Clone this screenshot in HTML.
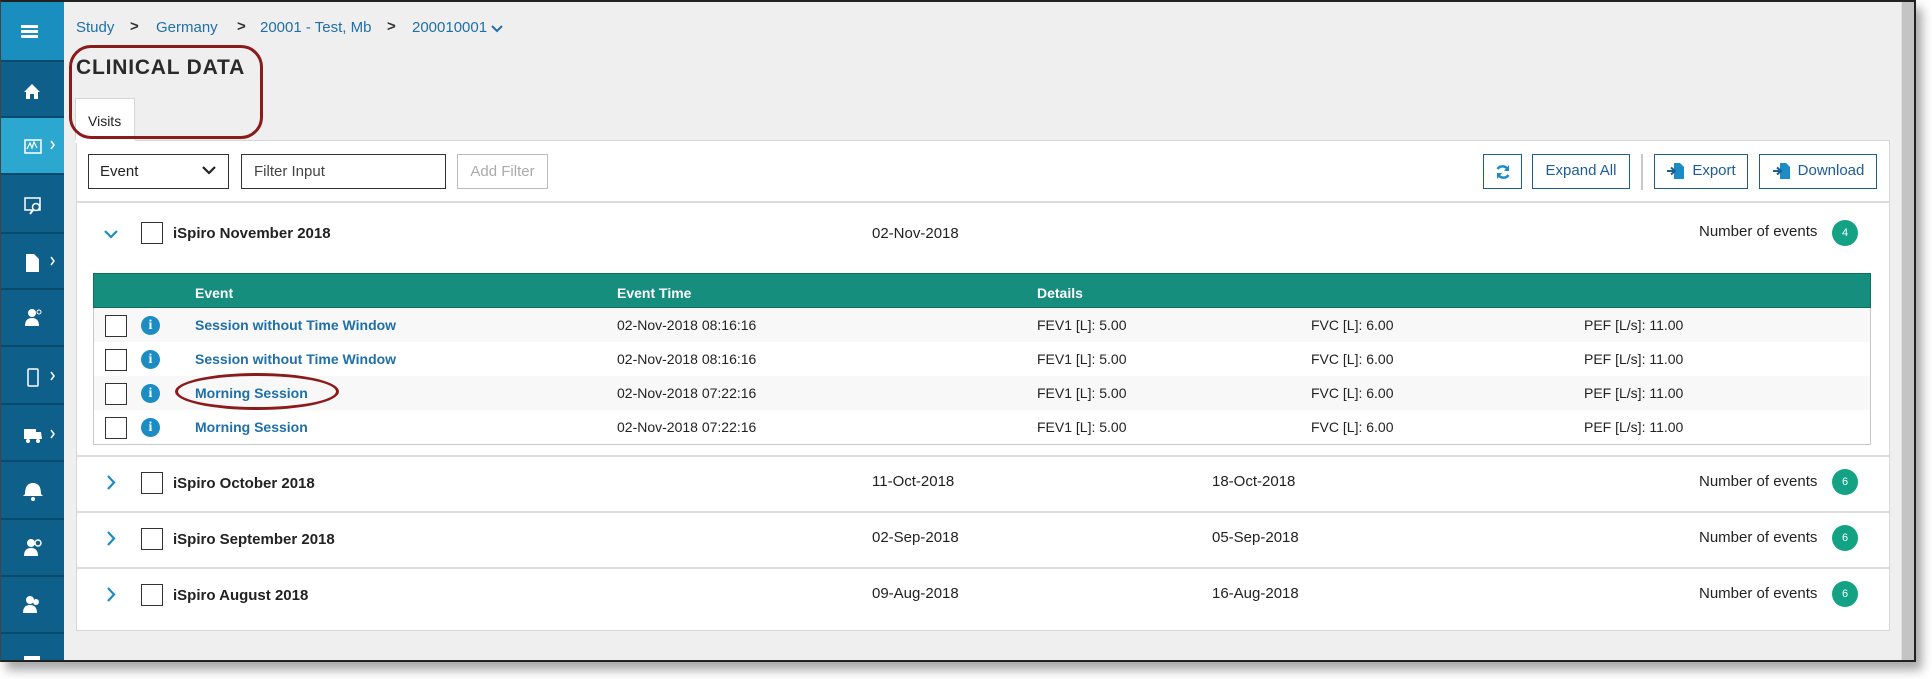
<!DOCTYPE html>
<html><head><meta charset="utf-8"><style>
*{margin:0;padding:0;box-sizing:border-box}
body{width:1932px;height:679px;background:#fff;position:relative;overflow:hidden;font-family:"Liberation Sans",sans-serif;color:#222}
.a{position:absolute}
#win{left:0;top:0;width:1916px;height:662px;background:#efefef;border:2px solid #222;border-left:1px solid #444;box-shadow:6px 8px 10px rgba(0,0,0,.35);overflow:hidden}
.sb{left:0;width:63px;background:#0f5f8b;border-bottom:2px solid #0a4a6c}
.bc{color:#1f6fa8;font-size:15px;top:17px}
.sep{color:#333;font-size:15px;top:16px;font-weight:bold}
.btn{border:1.5px solid #1c5d96;background:#fff;color:#1c5d96;font-size:15px;height:35px;top:152px;line-height:32px;text-align:center}
.chk{width:22px;height:22px;border:1.5px solid #333;background:#fff}
.t{font-size:14px}
.lnk{color:#1f6fa8;font-weight:bold;font-size:14px}
.hd{color:#fff;font-weight:bold;font-size:14px;top:283px}
.ttl{font-weight:bold;font-size:15px}
.badge{width:26px;height:26px;border-radius:13px;background:#14a285;color:#fff;font-size:11px;text-align:center;line-height:26px}
.hr{height:2px;background:#dcdcdc;left:76px;width:1812px}
.info{width:19px;height:19px;border-radius:10px;background:#1c8cc4;color:#fff;font-weight:bold;font-family:"Liberation Serif",serif;font-size:14px;text-align:center;line-height:19px;left:140px}
</style></head><body>
<div id="win" class="a">
<div class="a sb" style="top:0;height:60px;background:#1b8ec0"></div>
<div class="a" style="left:20px;top:23px;width:17px;height:3px;background:#fff;box-shadow:0 5px 0 #fff,0 10px 0 #fff"></div>
<div class="a sb" style="top:60px;height:56px"></div>
<div class="a sb" style="top:116px;height:57px;background:#2ca8d0"></div>
<div class="a sb" style="top:173px;height:59px"></div>
<div class="a sb" style="top:232px;height:56px"></div>
<div class="a sb" style="top:288px;height:57px"></div>
<div class="a sb" style="top:345px;height:58px"></div>
<div class="a sb" style="top:403px;height:57px"></div>
<div class="a sb" style="top:460px;height:58px"></div>
<div class="a sb" style="top:518px;height:57px"></div>
<div class="a sb" style="top:575px;height:57px"></div>
<div class="a sb" style="top:632px;height:40px"></div>
<svg class="a" style="left:0;top:0" width="63" height="662">
<g fill="#fff">
<path d="M23 90 L31 82 L39 90 L37 90 L37 97 L33 97 L33 92 L29 92 L29 97 L25 97 L25 90Z"/>
<rect x="24" y="138" width="16" height="13" fill="none" stroke="#fff" stroke-width="1.5"/>
<path d="M26 147 L29 141 L31 146 L33 140 L36 146" fill="none" stroke="#fff" stroke-width="1.2"/>
<path d="M50 139 L53 143 L50 147" fill="none" stroke="#fff" stroke-width="1.5"/>
<rect x="24" y="196" width="15" height="12" fill="none" stroke="#fff" stroke-width="1.5"/>
<circle cx="35" cy="205" r="3.5" fill="#0f5f8b" stroke="#fff" stroke-width="1.5"/>
<path d="M32 208 L29 212" stroke="#fff" stroke-width="2"/>
<path d="M25 252 L33 252 L38 257 L38 270 L25 270Z"/>
<path d="M50 255 L53 259 L50 263" fill="none" stroke="#fff" stroke-width="1.5"/>
<circle cx="31" cy="311" r="4"/><path d="M24 324 Q24 316 31 316 Q38 316 38 324Z"/><circle cx="38" cy="310" r="2" fill="none" stroke="#fff"/>
<rect x="27" y="367" width="10" height="17" rx="1" fill="none" stroke="#fff" stroke-width="1.5"/>
<path d="M50 370 L53 374 L50 378" fill="none" stroke="#fff" stroke-width="1.5"/>
<path d="M23 427 L35 427 L35 430 L40 430 L41 437 L23 437Z"/><circle cx="27" cy="439" r="2"/><circle cx="37" cy="439" r="2"/>
<path d="M50 428 L53 432 L50 436" fill="none" stroke="#fff" stroke-width="1.5"/>
<path d="M24 492 Q24 481 32 481 Q40 481 40 492 L42 494 L22 494Z"/><circle cx="32" cy="497" r="2"/>
<circle cx="30" cy="541" r="4"/><path d="M23 554 Q23 546 30 546 Q37 546 37 554Z"/><circle cx="37" cy="541" r="3" fill="none" stroke="#fff" stroke-width="1.5"/>
<circle cx="29" cy="598" r="4"/><path d="M22 611 Q22 603 29 603 Q36 603 36 611Z"/><circle cx="35" cy="600" r="3"/>
<rect x="23" y="654" width="16" height="8"/>
</g></svg>
<div class="a bc" style="left:75px">Study</div>
<div class="a sep" style="left:129px">&gt;</div>
<div class="a bc" style="left:155px">Germany</div>
<div class="a sep" style="left:236px">&gt;</div>
<div class="a bc" style="left:259px">20001 - Test, Mb</div>
<div class="a sep" style="left:386px">&gt;</div>
<div class="a bc" style="left:411px">200010001</div>
<svg class="a" style="left:489px;top:22px" width="14" height="10"><path d="M2 2 L7 7 L12 2" fill="none" stroke="#1f6fa8" stroke-width="2"/></svg>
<div class="a" style="left:75px;top:54px;font-size:21px;font-weight:bold;letter-spacing:0.8px;color:#2a2a2a">CLINICAL DATA</div>
<div class="a" style="left:74px;top:96px;width:60px;height:44px;background:#fff;border:1px solid #d6d6d6;border-bottom:none;font-size:14px;padding:14px 0 0 12px">Visits</div>
<div class="a" style="left:75px;top:138px;width:1814px;height:491px;background:#fff;border:1px solid #d6d6d6"></div>
<div class="a" style="left:74px;top:138px;width:60px;height:3px;background:#fff"></div>
<div class="a" style="left:87px;top:152px;width:141px;height:35px;border:1.5px solid #333;font-size:15px;padding:8px 11px">Event</div>
<svg class="a" style="left:200px;top:163px" width="16" height="12"><path d="M2 2 L8 8 L14 2" fill="none" stroke="#222" stroke-width="2.2"/></svg>
<div class="a" style="left:240px;top:152px;width:205px;height:35px;border:1.5px solid #333;font-size:15px;padding:8px 12px;color:#444">Filter Input</div>
<div class="a" style="left:456px;top:152px;width:91px;height:35px;border:1px solid #bbb;font-size:15px;color:#aaa;text-align:center;line-height:33px">Add Filter</div>
<div class="a btn" style="left:1482px;width:39px"><svg width="18" height="18" style="margin-top:8px"><path d="M14 7 A6 6 0 0 0 3.5 6 M4 11 A6 6 0 0 0 14.5 12" fill="none" stroke="#1c8cc4" stroke-width="2.5"/><path d="M15 2 L15 8 L10 8Z M3 16 L3 10 L8 10Z" fill="#1c8cc4"/></svg></div>
<div class="a btn" style="left:1531px;width:98px">Expand All</div>
<div class="a" style="left:1640px;top:152px;width:2px;height:36px;background:#c8c8c8"></div>
<div class="a btn" style="left:1653px;width:94px;padding-left:26px">Export</div>
<div class="a btn" style="left:1758px;width:118px;padding-left:26px">Download</div>
<svg class="a" style="left:1665px;top:159px" width="20" height="20"><path d="M8 2 L14 2 L18 6 L18 18 L8 18Z" fill="#1c8cc4"/><path d="M1 10 L8 10 M5 6.5 L9 10 L5 13.5" fill="none" stroke="#1c5d96" stroke-width="2"/></svg>
<svg class="a" style="left:1771px;top:159px" width="20" height="20"><path d="M8 2 L14 2 L18 6 L18 18 L8 18Z" fill="#1c8cc4"/><path d="M1 10 L8 10 M5 6.5 L9 10 L5 13.5" fill="none" stroke="#1c5d96" stroke-width="2"/></svg>
<div class="a hr" style="top:199px"></div>
<svg class="a" style="left:102px;top:227px" width="16" height="11"><path d="M2 2 L8 8 L14 2" fill="none" stroke="#1c8cc4" stroke-width="2.2"/></svg>
<div class="a chk" style="left:140px;top:220px"></div>
<div class="a ttl" style="left:172px;top:223px">iSpiro November 2018</div>
<div class="a t" style="left:871px;top:223px;font-size:15px">02-Nov-2018</div>
<div class="a" style="left:1698px;top:221px;font-size:15px">Number of events</div>
<div class="a badge" style="left:1831px;top:218px">4</div>
<div class="a" style="left:92px;top:271px;width:1778px;height:172px;border:1px solid #c8c8c8;border-top:none;background:#fff"></div>
<div class="a" style="left:92px;top:271px;width:1778px;height:35px;background:#168e7d;border:1px solid #0f6f5f"></div>
<div class="a hd" style="left:194px">Event</div>
<div class="a hd" style="left:616px">Event Time</div>
<div class="a hd" style="left:1036px">Details</div>
<div class="a" style="left:93px;top:306px;width:1776px;height:34px;background:#f8f8f8"></div>
<div class="a" style="left:93px;top:374px;width:1776px;height:34px;background:#f8f8f8"></div>

<div class="a chk" style="left:104px;top:313px"></div><div class="a info" style="left:140px;top:314px">i</div>
<div class="a lnk" style="left:194px;top:315px">Session without Time Window</div>
<div class="a t" style="left:616px;top:315px">02-Nov-2018 08:16:16</div><div class="a t" style="left:1036px;top:315px">FEV1 [L]: 5.00</div><div class="a t" style="left:1310px;top:315px">FVC [L]: 6.00</div><div class="a t" style="left:1583px;top:315px">PEF [L/s]: 11.00</div>

<div class="a chk" style="left:104px;top:347px"></div><div class="a info" style="left:140px;top:348px">i</div>
<div class="a lnk" style="left:194px;top:349px">Session without Time Window</div>
<div class="a t" style="left:616px;top:349px">02-Nov-2018 08:16:16</div><div class="a t" style="left:1036px;top:349px">FEV1 [L]: 5.00</div><div class="a t" style="left:1310px;top:349px">FVC [L]: 6.00</div><div class="a t" style="left:1583px;top:349px">PEF [L/s]: 11.00</div>

<div class="a chk" style="left:104px;top:381px"></div><div class="a info" style="left:140px;top:382px">i</div>
<div class="a lnk" style="left:194px;top:383px">Morning Session</div>
<div class="a t" style="left:616px;top:383px">02-Nov-2018 07:22:16</div><div class="a t" style="left:1036px;top:383px">FEV1 [L]: 5.00</div><div class="a t" style="left:1310px;top:383px">FVC [L]: 6.00</div><div class="a t" style="left:1583px;top:383px">PEF [L/s]: 11.00</div>

<div class="a chk" style="left:104px;top:415px"></div><div class="a info" style="left:140px;top:416px">i</div>
<div class="a lnk" style="left:194px;top:417px">Morning Session</div>
<div class="a t" style="left:616px;top:417px">02-Nov-2018 07:22:16</div><div class="a t" style="left:1036px;top:417px">FEV1 [L]: 5.00</div><div class="a t" style="left:1310px;top:417px">FVC [L]: 6.00</div><div class="a t" style="left:1583px;top:417px">PEF [L/s]: 11.00</div>

<div class="a hr" style="top:453px"></div>
<svg class="a" style="left:104px;top:472px" width="12" height="17"><path d="M3 2 L9 8.5 L3 15" fill="none" stroke="#1c8cc4" stroke-width="2.2"/></svg>
<div class="a chk" style="left:140px;top:470px"></div>
<div class="a ttl" style="left:172px;top:473px">iSpiro October 2018</div>
<div class="a" style="left:871px;top:471px;font-size:15px">11-Oct-2018</div>
<div class="a" style="left:1211px;top:471px;font-size:15px">18-Oct-2018</div>
<div class="a" style="left:1698px;top:471px;font-size:15px">Number of events</div>
<div class="a badge" style="left:1831px;top:467px">6</div>
<div class="a hr" style="top:509px"></div>

<svg class="a" style="left:104px;top:528px" width="12" height="17"><path d="M3 2 L9 8.5 L3 15" fill="none" stroke="#1c8cc4" stroke-width="2.2"/></svg>
<div class="a chk" style="left:140px;top:526px"></div>
<div class="a ttl" style="left:172px;top:529px">iSpiro September 2018</div>
<div class="a" style="left:871px;top:527px;font-size:15px">02-Sep-2018</div>
<div class="a" style="left:1211px;top:527px;font-size:15px">05-Sep-2018</div>
<div class="a" style="left:1698px;top:527px;font-size:15px">Number of events</div>
<div class="a badge" style="left:1831px;top:523px">6</div>
<div class="a hr" style="top:565px"></div>

<svg class="a" style="left:104px;top:584px" width="12" height="17"><path d="M3 2 L9 8.5 L3 15" fill="none" stroke="#1c8cc4" stroke-width="2.2"/></svg>
<div class="a chk" style="left:140px;top:582px"></div>
<div class="a ttl" style="left:172px;top:585px">iSpiro August 2018</div>
<div class="a" style="left:871px;top:583px;font-size:15px">09-Aug-2018</div>
<div class="a" style="left:1211px;top:583px;font-size:15px">16-Aug-2018</div>
<div class="a" style="left:1698px;top:583px;font-size:15px">Number of events</div>
<div class="a badge" style="left:1831px;top:579px">6</div>

<div class="a" style="left:1900px;top:0;width:14px;height:662px;background:#c4c4c4;border-left:1px solid #e0e0e0"></div>
<div class="a" style="left:68px;top:43px;width:194px;height:94px;border:3px solid #8b1a1a;border-radius:22px"></div>
<div class="a" style="left:174px;top:371px;width:164px;height:37px;border:3px solid #8b1a1a;border-radius:50%"></div>
</div>
</body></html>
